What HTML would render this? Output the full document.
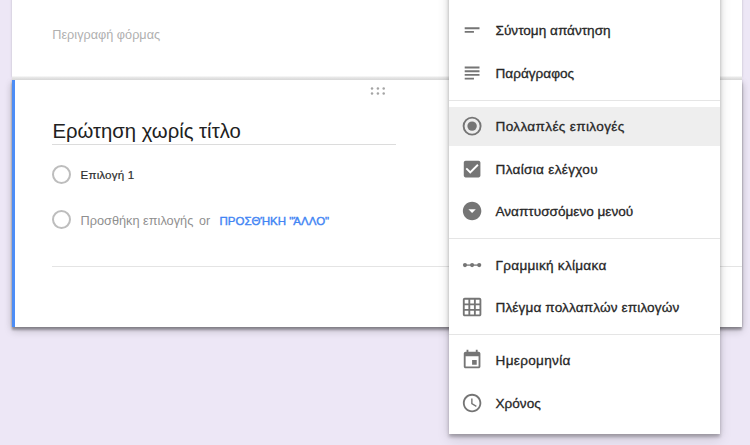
<!DOCTYPE html>
<html><head><meta charset="utf-8">
<style>
html,body{margin:0;padding:0;}
body{width:750px;height:445px;overflow:hidden;background:#ede7f6;position:relative;font-family:"Liberation Sans",sans-serif;}
.abs{position:absolute;}
#card1{left:12px;top:-20px;width:730px;height:96px;background:#fff;box-shadow:0 2px 1px -1px rgba(0,0,0,.2),0 1px 1px 0 rgba(0,0,0,.14),0 1px 3px 0 rgba(0,0,0,.12);}
#card2{left:12px;top:80px;width:730px;height:247px;background:#fff;box-shadow:0 3px 2px rgba(0,0,0,.28),0 4px 8px rgba(0,0,0,.18),0 0 7px rgba(0,0,0,.08),0 0 2px rgba(0,0,0,.16);}
#bar{left:12px;top:80px;width:3px;height:247px;background:#4d8df5;}
#sh12{left:12px;top:76px;width:730px;height:4px;background:linear-gradient(#fbfbfb 0%,#e6e6e6 40%,#d7d7d7 100%);}
.m{position:absolute;white-space:nowrap;}
#desc{left:52.3px;top:25px;line-height:20px;font-size:12.7px;color:#b0b0b0;}
#qt{left:52.4px;top:121px;line-height:20px;font-size:20.3px;color:#212121;}
#ul{left:52px;top:144px;width:344px;height:1px;background:#dcdcdc;}
.dots{left:371px;top:87px;width:14px;height:8px;}
.radio{width:15px;height:15px;border:2px solid #bdbdbd;border-radius:50%;}
#o1{left:80.6px;top:164.6px;line-height:20px;font-size:11.6px;color:#2e2e2e;-webkit-text-stroke:0.2px #2e2e2e;letter-spacing:0.15px;}
#o2{left:80.5px;top:211px;line-height:20px;font-size:12.75px;color:#8f8f8f;}
#or{left:199px;top:211px;line-height:20px;font-size:12.5px;color:#8f8f8f;}
#other{left:219.5px;top:210.6px;line-height:20px;font-size:11.5px;color:#4285f4;-webkit-text-stroke:0.4px #4285f4;}
#hr2{left:52px;top:266px;width:690px;height:1px;background:#e4e4e4;}
#menu{left:449px;top:-20px;width:271px;height:454px;background:#fff;box-shadow:0 3px 3px rgba(0,0,0,.22),0 6px 12px rgba(0,0,0,.12),0 1px 7px rgba(0,0,0,.1);}
.div{position:absolute;left:449px;width:271px;height:1px;background:#e5e5e5;}
#hl{left:449px;top:107px;width:271px;height:39px;background:#eeeeee;}
.mi{font-size:13.6px;line-height:20px;color:#262626;font-weight:normal;-webkit-text-stroke:0.3px #262626;left:495.5px;}
.ic{position:absolute;left:461.2px;width:22.2px;height:22.2px;}
</style></head><body>
<div id="card2" class="abs"></div>
<div id="card1" class="abs"></div>
<div id="sh12" class="abs"></div>
<div id="bar" class="abs"></div>
<div id="desc" class="m">Περιγραφή φόρμας</div>
<svg class="abs" style="left:368px;top:85px" width="20" height="12" viewBox="0 0 20 12"><g fill="#a4a4a4"><circle cx="4.0" cy="3.6" r="1.25"/><circle cx="9.9" cy="3.6" r="1.25"/><circle cx="15.7" cy="3.6" r="1.25"/><circle cx="4.0" cy="8.4" r="1.25"/><circle cx="9.9" cy="8.4" r="1.25"/><circle cx="15.7" cy="8.4" r="1.25"/></g></svg>
<div id="qt" class="m">Ερώτηση χωρίς τίτλο</div>
<div id="ul" class="abs"></div>
<div class="abs radio" style="left:52px;top:165px;"></div>
<div id="o1" class="m">Επιλογή 1</div>
<div class="abs radio" style="left:52px;top:210px;"></div>
<div id="o2" class="m">Προσθήκη επιλογής</div>
<div id="or" class="m">or</div>
<div id="other" class="m">ΠΡΟΣΘΉΚΗ "ΆΛΛΟ"</div>
<div id="hr2" class="abs"></div>

<div id="menu" class="abs"></div>
<div class="div" style="top:100px"></div>
<div class="div" style="top:238px"></div>
<div class="div" style="top:334px"></div>
<div id="hl" class="abs"></div>

<svg class="ic" style="top:19.45px" viewBox="0 0 24 24"><g fill="#757575"><path d="M4 9h16v2H4zm0 4h10v2H4z"/></g></svg>
<div class="m mi" style="top:21px">Σύντομη απάντηση</div>

<svg class="ic" style="top:61.90px" viewBox="0 0 24 24"><g fill="#757575"><path d="M14 17H4v2h10v-2zm6-8H4v2h16V9zM4 15h16v-2H4v2zM4 5v2h16V5H4z"/></g></svg>
<div class="m mi" style="top:64px">Παράγραφος</div>

<svg class="ic" style="top:115.10px" viewBox="0 0 24 24"><g fill="#757575"><circle cx="12" cy="12" r="9.2" fill="none" stroke="#757575" stroke-width="2.05"/><circle cx="12" cy="12" r="5.1"/></g></svg>
<div class="m mi" style="top:117px;letter-spacing:0.34px">Πολλαπλές επιλογές</div>

<svg class="ic" style="top:157.60px" viewBox="0 0 24 24"><g fill="#757575"><path d="M19 3H5c-1.11 0-2 .9-2 2v14c0 1.1.89 2 2 2h14c1.11 0 2-.9 2-2V5c0-1.1-.89-2-2-2zm-9 14l-5-5 1.41-1.41L10 14.17l7.59-7.59L19 8l-9 9z"/></g></svg>
<div class="m mi" style="top:160px;letter-spacing:0.31px">Πλαίσια ελέγχου</div>

<svg class="ic" style="top:200.25px" viewBox="0 0 24 24"><g fill="#757575"><path d="M12 2C6.48 2 2 6.48 2 12s4.48 10 10 10 10-4.48 10-10S17.52 2 12 2zm0 12l-4-4h8l-4 4z"/></g></svg>
<div class="m mi" style="top:202px">Αναπτυσσόμενο μενού</div>

<svg class="ic" style="top:253.50px" viewBox="0 0 24 24"><g fill="#757575"><circle cx="4.3" cy="12" r="2.25"/><circle cx="12" cy="12" r="2.25"/><circle cx="19.7" cy="12" r="2.25"/><rect x="4" y="11.3" width="16" height="1.4"/></g></svg>
<div class="m mi" style="top:255.5px;letter-spacing:0.27px">Γραμμική κλίμακα</div>

<svg class="ic" style="top:296.20px" viewBox="0 0 24 24"><g fill="#757575"><path d="M20 2H4c-1.1 0-2 .9-2 2v16c0 1.1.9 2 2 2h16c1.1 0 2-.9 2-2V4c0-1.1-.9-2-2-2zM8 20H4v-4h4v4zm0-6H4v-4h4v4zm0-6H4V4h4v4zm6 12h-4v-4h4v4zm0-6h-4v-4h4v4zm0-6h-4V4h4v4zm6 12h-4v-4h4v4zm0-6h-4v-4h4v4zm0-6h-4V4h4v4z"/></g></svg>
<div class="m mi" style="top:298px;letter-spacing:0.13px">Πλέγμα πολλαπλών επιλογών</div>

<svg class="ic" style="top:348.15px" viewBox="0 0 24 24"><g fill="#757575"><path d="M19 4h-1V2h-2v2H8V2H6v2H5c-1.11 0-2 .9-2 2v14c0 1.1.89 2 2 2h14c1.1 0 2-.9 2-2V6c0-1.1-.9-2-2-2zm0 16H5V9h14v11zM17 13h-5v5h5v-5z"/></g></svg>
<div class="m mi" style="top:351px;letter-spacing:0.31px">Ημερομηνία</div>

<svg class="ic" style="top:392.00px" viewBox="0 0 24 24"><g fill="#757575"><path d="M11.99 2C6.47 2 2 6.48 2 12s4.47 10 9.99 10C17.52 22 22 17.52 22 12S17.52 2 11.99 2zM12 20c-4.42 0-8-3.58-8-8s3.58-8 8-8 8 3.58 8 8-3.58 8-8 8zm.5-13H11v6l5.25 3.15.75-1.23-4.5-2.67z"/></g></svg>
<div class="m mi" style="top:394px">Χρόνος</div>
</body></html>
